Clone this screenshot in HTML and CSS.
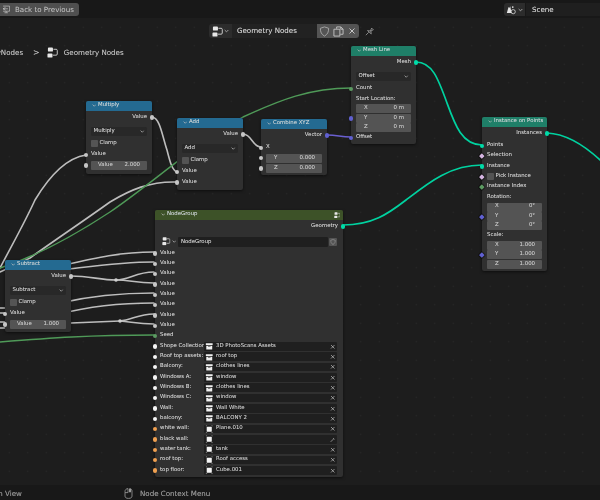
FILE: index.html
```html
<!DOCTYPE html>
<html lang="en">
<head>
<meta charset="utf-8">
<title>Geometry Nodes</title>
<link rel="stylesheet" href="styles.css">
</head>
<body>
<svg class="defs" width="0" height="0">
  <symbol id="tree" viewBox="0 0 12 12"><path d="M1 1.500a1 1 0 0 1 1-1h3.500a1 1 0 0 1 1 1V4a1 1 0 0 1-1 1H2a1 1 0 0 1-1-1zM.5 8a1 1 0 0 1 1-1H5a1 1 0 0 1 1 1v2.500a1 1 0 0 1-1 1H1.500a1 1 0 0 1-1-1z" fill="#e8e8e8"/><path d="M7 2.500h3a1.200 1.200 0 0 1 1.200 1.200v4a1.200 1.200 0 0 1-1.200 1.200H6.500" fill="none" stroke="#e8e8e8" stroke-width=".9"/></symbol>
  <symbol id="coll" viewBox="0 0 10 10"><path d="M1 1.500h8v2H1z" fill="#f0f0f0"/><path d="M1.500 4.300h7v4.400h-7zM3.500 5.200v.8h3v-.8z" fill="#f0f0f0" fill-rule="evenodd"/></symbol>
  <symbol id="obj" viewBox="0 0 10 10"><rect x="2" y="2" width="6" height="6" rx="1" fill="#f4f4f4"/><path d="M1 1h1.500M7.500 1H9M1 9h1.500M7.500 9H9" stroke="#aaa" stroke-width=".8"/></symbol>
  <symbol id="shield" viewBox="0 0 12 12"><path d="M6 1l4.500 1.500c0 4-1 6.500-4.500 8.500C2.500 9 1.500 6.500 1.500 2.500z" fill="none" stroke="#a8a8a8" stroke-width="1"/></symbol>
  <symbol id="chev" viewBox="0 0 6 4"><path d="M.8.8L3 3l2.200-2.200" fill="none" stroke="currentColor" stroke-width=".9"/></symbol>
  <symbol id="x" viewBox="0 0 8 8"><path d="M1.500 1.500l5 5m0-5l-5 5" stroke="#c4c4c4" stroke-width="1"/></symbol>
</svg>
<div class="app">
  <header class="topbar">
    <button class="back"><svg class="back-ic" viewBox="0 0 13 11"><path d="M3 .6h9.400v7.400H3M7.500 8v2M5 10.200h5" fill="none" stroke="#cfcfcf" stroke-width=".9"/><path d="M6.500 2.500L3 4.500l3.500 2M3 4.500h7" fill="none" stroke="#cfcfcf" stroke-width=".9"/></svg><span>Back to Previous</span></button>
    <div class="scene">
      <div class="scene-ic"><svg class="scene-glyph" viewBox="0 0 13 11"><path d="M1 9l2-7 1 1 1-2 1.500 8z" fill="#e4e4e4"/><circle cx="8.500" cy="7.500" r="2.500" fill="none" stroke="#e4e4e4" stroke-width=".9"/><circle cx="8" cy="2" r="1" fill="#e4e4e4"/></svg><svg class="chev-s"><use href="#chev"/></svg></div>
      <div class="scene-name">Scene</div>
    </div>
  </header>
  <main class="editor">
    <div class="ed-head">
      <div class="dblock">
        <div class="db-ic"><svg class="tree-l"><use href="#tree"/></svg><svg class="chev-s"><use href="#chev"/></svg></div>
        <div class="db-name">Geometry Nodes</div>
        <div class="db-btn"><svg class="db-glyph"><use href="#shield"/></svg></div>
        <div class="db-btn"><svg class="db-glyph" viewBox="0 0 12 12"><path d="M4 3V1h4.500L11 3.500V9H8M1 3.500h6.500V11H1zM8.500 1v2.500H11" fill="none" stroke="#d0d0d0" stroke-width=".9"/></svg></div>
        <div class="db-btn last"><svg class="db-x"><use href="#x"/></svg></div>
      </div>
      <svg class="pin" viewBox="0 0 12 12"><path d="M1 11l3.500-3.500M3 5.500L6.500 6 8 2.500l2 2L7 6l.5 3.500z" fill="none" stroke="#a8a8a8" stroke-width=".9"/></svg>
    </div>
    <div class="crumbs"><span class="crumb-cut">GeometryNodes</span><span class="crumb-sep">&gt;</span><svg class="tree-l"><use href="#tree"/></svg><span class="crumb-now">Geometry Nodes</span></div>

    <svg class="wires" viewBox="0 18 600 467" width="600" height="467" fill="none" stroke-linecap="round">
      <g class="w-val">
        <path d="M152 117C160 118 162 135 167 150C170 162 172 170 177 172"/>
        <path d="M243 134C252 134 252 147 261 147"/>
        <path d="M86 155C66 158 50 175 35 200C25 222 12 245 0 268"/>
        <path d="M177 182C150 181 130 190 110 202C85 220 55 240 30 258C18 264 8 268 0 272"/>
        <path d="M71 276C90 276 100 280 116 280"/>
        <path d="M116 280C130 280 135 272 154 272"/>
        <path d="M116 280C130 280 135 283 154 283"/>
        <path d="M71 323L120 321"/>
        <path d="M120 321C132 320 138 314 154 314"/>
        <path d="M120 321C132 322 138 324 154 324"/>
        <path d="M60 266C95 258 120 252 154 252"/>
        <path d="M60 270C95 266 120 262 154 262"/>
        <path d="M60 303C90 296 120 293 154 293"/>
        <path d="M60 314C90 306 120 303 154 303"/>
        <path d="M0 308H8M0 313H8M0 322H8M0 328H8"/>
      </g>
      <g class="w-int">
        <path d="M351 88C310 88 280 100 243 117C200 140 150 185 110 212C75 235 40 255 0 268"/>
        <path d="M154 335C90 335 50 338 0 342"/>
      </g>
      <g class="w-geo">
        <path d="M343 225C372 225 388 214 406 200C428 183 450 165 482 165"/>
        <path d="M416 62C432 62 438 78 447 103C455 125 462 145 482 145"/>
        <path d="M547 133C568 134 585 146 600 160"/>
      </g>
      <path class="w-vec" d="M327 135C338 135 340 137 351 137"/>
      <circle class="rr" cx="116" cy="280" r="1.800"/>
      <circle class="rr" cx="120" cy="321" r="1.800"/>
    </svg>

    <section class="node n-mul">
      <h3 class="nh math"><svg class="chev-n"><use href="#chev"/></svg>Multiply</h3>
      <div class="row out gap-m"><span>Value</span><i class="s val"></i></div>
      <div class="dd gap-s"><span>Multiply</span><svg class="chev-n"><use href="#chev"/></svg></div>
      <div class="row gap-c"><b class="cb"></b><span>Clamp</span></div>
      <div class="row"><i class="s val"></i><span>Value</span></div>
      <div class="fld"><i class="s val"></i><span>Value</span><span>2.000</span></div>
    </section>

    <section class="node n-add">
      <h3 class="nh math"><svg class="chev-n"><use href="#chev"/></svg>Add</h3>
      <div class="row out gap-m"><span>Value</span><i class="s val"></i></div>
      <div class="dd gap-s"><span>Add</span><svg class="chev-n"><use href="#chev"/></svg></div>
      <div class="row gap-c"><b class="cb"></b><span>Clamp</span></div>
      <div class="row"><i class="s val"></i><span>Value</span></div>
      <div class="row"><i class="s val"></i><span>Value</span></div>
    </section>

    <section class="node n-xyz">
      <h3 class="nh math"><svg class="chev-n"><use href="#chev"/></svg>Combine XYZ</h3>
      <div class="row out gap-t"><span>Vector</span><i class="s vec"></i></div>
      <div class="row"><i class="s val"></i><span>X</span></div>
      <div class="fld"><i class="s val"></i><span class="ax">Y</span><span>0.000</span></div>
      <div class="fld f-next"><i class="s val"></i><span class="ax">Z</span><span>0.000</span></div>
    </section>

    <section class="node n-line">
      <h3 class="nh geo"><svg class="chev-n"><use href="#chev"/></svg>Mesh Line</h3>
      <div class="row out gap-m"><span>Mesh</span><i class="s geo-s"></i></div>
      <div class="dd gap-s"><span>Offset</span><svg class="chev-n"><use href="#chev"/></svg></div>
      <div class="row"><i class="s int"></i><span>Count</span></div>
      <div class="row"><span>Start Location:</span></div>
      <div class="stack"><i class="s vec mid"></i>
        <div class="fld"><span class="ax">X</span><span>0 m</span></div>
        <div class="fld"><span class="ax">Y</span><span>0 m</span></div>
        <div class="fld"><span class="ax">Z</span><span>0 m</span></div>
      </div>
      <div class="row"><i class="s vec"></i><span>Offset</span></div>
    </section>

    <section class="node n-inst">
      <h3 class="nh geo"><svg class="chev-n"><use href="#chev"/></svg>Instance on Points</h3>
      <div class="row out gap-t"><span>Instances</span><i class="s geo-s"></i></div>
      <div class="row"><i class="s geo-s"></i><span>Points</span></div>
      <div class="row"><i class="s dia boo"></i><span>Selection</span></div>
      <div class="row"><i class="s geo-s"></i><span>Instance</span></div>
      <div class="row"><i class="s dia boo"></i><b class="cb"></b><span>Pick Instance</span></div>
      <div class="row"><i class="s dia int"></i><span>Instance Index</span></div>
      <div class="row"><span>Rotation:</span></div>
      <div class="stack"><i class="s dia vec mid"></i>
        <div class="fld"><span class="ax">X</span><span>0°</span></div>
        <div class="fld"><span class="ax">Y</span><span>0°</span></div>
        <div class="fld"><span class="ax">Z</span><span>0°</span></div>
      </div>
      <div class="row"><span>Scale:</span></div>
      <div class="stack"><i class="s dia vec mid"></i>
        <div class="fld"><span class="ax">X</span><span>1.000</span></div>
        <div class="fld"><span class="ax">Y</span><span>1.000</span></div>
        <div class="fld"><span class="ax">Z</span><span>1.000</span></div>
      </div>
    </section>

    <section class="node n-sub">
      <h3 class="nh math"><svg class="chev-n"><use href="#chev"/></svg>Subtract</h3>
      <div class="row out gap-m"><span>Value</span><i class="s val"></i></div>
      <div class="dd gap-s"><span>Subtract</span><svg class="chev-n"><use href="#chev"/></svg></div>
      <div class="row gap-c"><b class="cb"></b><span>Clamp</span></div>
      <div class="row"><i class="s val"></i><span>Value</span></div>
      <div class="fld"><i class="s val"></i><span>Value</span><span>1.000</span></div>
    </section>

    <section class="node n-grp">
      <h3 class="nh grp"><svg class="chev-n"><use href="#chev"/></svg>NodeGroup<svg class="nh-ic"><use href="#tree"/></svg></h3>
      <div class="row out gap-m"><span>Geometry</span><i class="s geo-s"></i></div>
      <div class="picker">
        <svg class="tree-m"><use href="#tree"/></svg><svg class="chev-n"><use href="#chev"/></svg>
        <div class="pick-name">NodeGroup</div>
        <div class="pick-btn"><svg class="pick-sh"><use href="#shield"/></svg></div>
      </div>
      <div class="row"><i class="s val"></i><span>Value</span></div>
      <div class="row"><i class="s val"></i><span>Value</span></div>
      <div class="row"><i class="s val"></i><span>Value</span></div>
      <div class="row"><i class="s val"></i><span>Value</span></div>
      <div class="row"><i class="s val"></i><span>Value</span></div>
      <div class="row"><i class="s val"></i><span>Value</span></div>
      <div class="row"><i class="s val"></i><span>Value</span></div>
      <div class="row"><i class="s val"></i><span>Value</span></div>
      <div class="row"><i class="s int"></i><span>Seed</span></div>
      <div class="prop"><i class="s col"></i><label>Shope Collection</label><div class="pf"><svg class="pf-ic"><use href="#coll"/></svg><span>3D PhotoScans Assets</span><svg class="pf-x"><use href="#x"/></svg></div></div>
      <div class="prop"><i class="s col"></i><label>Roof top assets:</label><div class="pf"><svg class="pf-ic"><use href="#coll"/></svg><span>roof top</span><svg class="pf-x"><use href="#x"/></svg></div></div>
      <div class="prop"><i class="s col"></i><label>Balcony:</label><div class="pf"><svg class="pf-ic"><use href="#coll"/></svg><span>clothes lines</span><svg class="pf-x"><use href="#x"/></svg></div></div>
      <div class="prop"><i class="s col"></i><label>Windows A:</label><div class="pf"><svg class="pf-ic"><use href="#coll"/></svg><span>window</span><svg class="pf-x"><use href="#x"/></svg></div></div>
      <div class="prop"><i class="s col"></i><label>Windows B:</label><div class="pf"><svg class="pf-ic"><use href="#coll"/></svg><span>clothes lines</span><svg class="pf-x"><use href="#x"/></svg></div></div>
      <div class="prop"><i class="s col"></i><label>Windows C:</label><div class="pf"><svg class="pf-ic"><use href="#coll"/></svg><span>window</span><svg class="pf-x"><use href="#x"/></svg></div></div>
      <div class="prop"><i class="s col"></i><label>Wall:</label><div class="pf"><svg class="pf-ic"><use href="#coll"/></svg><span>Wall White</span><svg class="pf-x"><use href="#x"/></svg></div></div>
      <div class="prop"><i class="s col"></i><label>balcony:</label><div class="pf"><svg class="pf-ic"><use href="#coll"/></svg><span>BALCONY 2</span><svg class="pf-x"><use href="#x"/></svg></div></div>
      <div class="prop"><i class="s ob"></i><label>white wall:</label><div class="pf"><svg class="pf-ic"><use href="#obj"/></svg><span>Plane.010</span><svg class="pf-x"><use href="#x"/></svg></div></div>
      <div class="prop"><i class="s ob"></i><label>black wall:</label><div class="pf"><svg class="pf-ic"><use href="#obj"/></svg><span></span><svg class="pf-x" viewBox="0 0 8 8"><path d="M1 7l4-4M4.500 1.500l2 2" stroke="#9a9a9a" stroke-width="1.300"/></svg></div></div>
      <div class="prop"><i class="s ob"></i><label>water tank:</label><div class="pf"><svg class="pf-ic"><use href="#obj"/></svg><span>tank</span><svg class="pf-x"><use href="#x"/></svg></div></div>
      <div class="prop"><i class="s ob"></i><label>roof top:</label><div class="pf"><svg class="pf-ic"><use href="#obj"/></svg><span>Roof access</span><svg class="pf-x"><use href="#x"/></svg></div></div>
      <div class="prop"><i class="s ob"></i><label>top floor:</label><div class="pf"><svg class="pf-ic"><use href="#obj"/></svg><span>Cube.001</span><svg class="pf-x"><use href="#x"/></svg></div></div>
    </section>
  </main>
  <footer class="status">
    <span class="st-cut">Pan View</span>
    <svg class="mouse" viewBox="0 0 9 11"><path d="M1 3.500C1 1.500 2.500.6 4 .6v4H1zM1 4.600V8c0 1.500 1 2.400 3.500 2.400S8 9.500 8 8V3C8 1.500 7 .6 5.500.6" fill="none" stroke="#9c9c9c" stroke-width=".8"/><path d="M5 .8h2v3.500H5z" fill="#9c9c9c"/></svg>
    <span>Node Context Menu</span>
  </footer>
</div>
</body>
</html>
```

FILE: styles.css
```css
* { box-sizing: border-box; }
html, body { margin: 0; padding: 0; background: #1d1d1d; }
.defs { position: absolute; }
.app {
  width: 600px; height: 500px; overflow: hidden;
  display: flex; flex-direction: column;
  font-family: "DejaVu Sans", sans-serif;
  text-rendering: geometricPrecision;
  color: #cdcdcd;
  text-shadow: 0 0 .4px rgba(205,205,205,.55);
  filter: blur(.3px);
}
.topbar {
  height: 18px; flex: none; background: #181818;
  display: flex; justify-content: space-between; align-items: flex-start; padding-top: 3px;
}
.back {
  width: 79px; height: 13px; border: 0; padding: 0 0 0 1px; margin: 0;
  background: #4f4f4f; border-radius: 0 3px 3px 0;
  display: flex; align-items: center; gap: 5px;
  font: 7.1px "DejaVu Sans", sans-serif; color: #c8c8c8; text-rendering: geometricPrecision;
}
.back-ic { width: 9px; height: 9px; }
.scene { width: 96px; height: 13px; display: flex; gap: 1px; }
.scene-ic { width: 21px; background: #2c2c2c; border-radius: 3px 0 0 3px; display: flex; align-items: center; justify-content: center; gap: 1px; color: #c8c8c8; }
.scene-glyph { width: 11px; height: 10px; }
.scene-name { flex: 1; background: #1f1f1f; font-size: 7.1px; line-height: 13px; padding-left: 6px; color: #d0d0d0; }
.chev-s { width: 5px; height: 4px; color: #c8c8c8; }

.editor {
  flex: 1; position: relative; overflow: hidden; min-height: 0;
  background-color: #1d1d1d;
  background-image: radial-gradient(circle at center, #2b2b2b .7px, transparent 1px);
  background-size: 18.500px 18.500px;
}
.ed-head { height: 20px; margin-top: 3px; padding-left: 209px; display: flex; align-items: center; gap: 6px; position: relative; }
.dblock { height: 14px; display: flex; }
.db-ic { width: 23px; background: #2c2c2c; border-radius: 3px 0 0 3px; display: flex; align-items: center; justify-content: center; gap: 1px; }
.tree-l { width: 11px; height: 11px; }
.db-name { width: 85px; background: #222; font-size: 7.1px; line-height: 14px; padding-left: 5px; color: #cfcfcf; }
.db-btn { width: 14px; background: #545454; margin-left: 0; display: flex; align-items: center; justify-content: center; }
.db-btn.last { border-radius: 0 3px 3px 0; }
.db-glyph { width: 11px; height: 11px; }
.db-x { width: 8px; height: 8px; }
.pin { width: 10px; height: 10px; }
.crumbs { margin: 5px 0 0 -34.500px; height: 12px; display: flex; align-items: center; font-size: 7.100px; color: #bcbcbc; position: relative; }
.crumb-sep { margin: 0 6px 0 10px; font-size: 8px; }
.crumb-now { margin-left: 6px; }
.crumbs .tree-l { margin-left: 1px; }

.wires { position: absolute; left: 0; top: 0; }
.w-val { stroke: #bdbdbd; stroke-width: 1.600; }
.w-int { stroke: #4f9a58; stroke-width: 1.400; }
.w-geo { stroke: #00d2a0; stroke-width: 1.700; }
.w-vec { stroke: #6a5fd0; stroke-width: 1.600; }
.rr { fill: #d0d0d0; }

.node {
  position: absolute; background: #303030; border-radius: 2px;
  font-size: 5.400px; line-height: 1; padding-bottom: 2px;
  box-shadow: 0 1px 3px rgba(0,0,0,.55);
}
.n-mul { left: 86px; top: 83px; width: 66px; height: 73px; }
.n-add { left: 177px; top: 100px; width: 66px; height: 72px; }
.n-xyz { left: 261px; top: 101px; width: 66px; height: 56px; }
.n-line { left: 351px; top: 28px; width: 65px; height: 98px; }
.n-inst { left: 482px; top: 99px; width: 65px; height: 154px; }
.n-sub { left: 5px; top: 242px; width: 66px; height: 72px; }
.n-grp { left: 155px; top: 192px; width: 188px; height: 267px; }

.nh {
  margin: 0 0 2px; height: 9.500px; border-radius: 2px 2px 0 0;
  font-size: 5.400px; font-weight: 400; color: #c9d3d6;
  display: flex; align-items: center; gap: 2px; padding-left: 5.500px; position: relative;
}
.math { background: #246a91; }
.geo { background: #1f7f68; }
.grp { background: #3d5228; }
.chev-n { width: 4.500px; height: 3px; color: #c4c4c4; flex: none; }
.nh-ic { width: 6.500px; height: 6.500px; position: absolute; right: 3px; top: 1.500px; }

.row { height: 10.330px; display: flex; align-items: center; gap: 1.500px; padding: 0 5px; position: relative; }
.row.out { justify-content: flex-end; }
.gap-m { margin-bottom: 4.500px; }
.gap-s { margin-bottom: 2.500px; }
.gap-t { margin-bottom: 1.800px; }
.gap-c { margin-bottom: .8px; }
.cb { width: 7px; height: 7px; background: #545454; border-radius: 1px; flex: none; }

.dd {
  height: 9px; margin-left: 5px; margin-right: 5px; background: #282828; border-radius: 1.500px;
  display: flex; align-items: center; justify-content: space-between; padding: 0 2.500px;
}
.fld {
  height: 9px; margin: .8px 5px 0; background: #545454; border-radius: 1px;
  display: flex; align-items: center; justify-content: space-between; padding: 0 7px;
  color: #c4c4c4; position: relative;
}
.f-next { margin-top: 1.200px; }
.stack { position: relative; margin: 0 5px; padding: 0; }
.stack .fld { margin: 0 0 .4px; }
.ax { margin-left: 1px; }

.s { position: absolute; left: -2.200px; top: 50%; width: 4.400px; height: 4.400px; margin-top: -2.200px; border-radius: 50%; background: #c0c0c0; }
.out .s { left: auto; right: -2.200px; }
.fld > .s { left: -7.200px; }
.stack > .s { left: -7.200px; }
.val { background: #c6c6c6; }
.vec { background: #6060d0; }
.int { background: #5c9a62; }
.geo-s { background: #00dba8; }
.boo { background: #d4b4e0; }
.col { background: #f6f6f6; }
.ob { background: #f0a050; }
.dia { transform: rotate(45deg); border-radius: .5px; width: 3.600px; height: 3.600px; margin-top: -1.800px; left: -1.800px; outline: .5px solid rgba(0,0,0,.4); }
.stack > .dia { left: -6.800px; }

.picker { height: 10.500px; margin: 0 6px 1.500px; display: flex; align-items: center; gap: 1px; }
.tree-m { width: 8.500px; height: 8.500px; margin-left: 1px; }
.pick-name { flex: 1; height: 10px; background: #1f1f1f; line-height: 10px; padding-left: 3px; margin-left: 1px; border-radius: 1px; }
.pick-btn { width: 8px; height: 8px; background: #545454; border-radius: 1px; display: flex; align-items: center; justify-content: center; }
.pick-sh { width: 6px; height: 6px; }

.prop { height: 10.330px; display: flex; align-items: center; padding: 0 6px 0 5px; position: relative; }
.prop label { width: 44px; flex: none; white-space: nowrap; }
.pf { flex: 1; height: 8.700px; background: #1f1f1f; border-radius: 1px; display: flex; align-items: center; padding: 0 2px 0 1px; }
.pf span { flex: 1; margin-left: 2.500px; white-space: nowrap; color: #c4c4c4; }
.pf-ic { width: 8.500px; height: 8.500px; flex: none; }
.pf-x { width: 5.500px; height: 5.500px; flex: none; }

.status {
  height: 15px; flex: none; background: #181818; position: relative;
  display: flex; align-items: center; font-size: 7.100px; color: #8f8f8f; padding-top: 2px;
}
.st-cut { margin-left: -10px; width: 134px; }
.mouse { width: 9px; height: 11px; margin-right: 7px; }
```
